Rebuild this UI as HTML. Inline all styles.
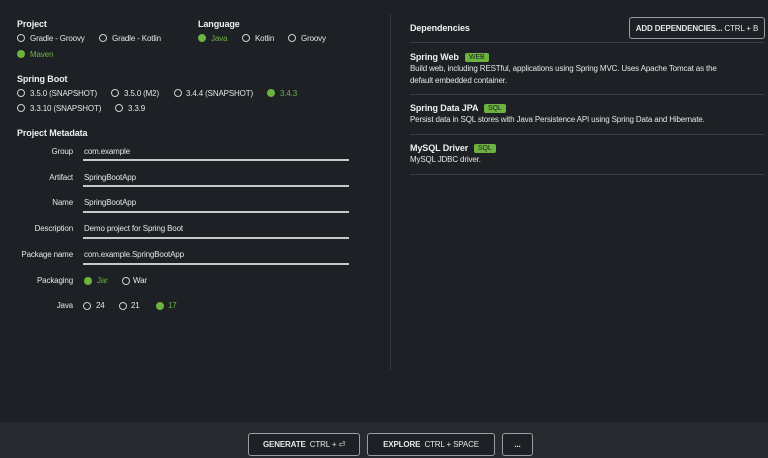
<!DOCTYPE html>
<html><head><meta charset="utf-8"><style>
*{margin:0;padding:0;box-sizing:border-box}
body{width:768px;height:458px;background:#1d2024;font-family:"Liberation Sans",sans-serif;color:#e6e6e6;position:relative;overflow:hidden;font-size:8px;letter-spacing:-0.15px}
.a{position:absolute;white-space:nowrap;line-height:10px}
.h{font-weight:bold;font-size:9px;color:#f0f0f0;letter-spacing:-0.1px}
.r{position:absolute;width:8px;height:8px;border:1px solid #cfcfcf;border-radius:50%}
.r.on{background:#6db33f;border-color:#6db33f}
.g{color:#6db33f}
.lbl{position:absolute;right:695px;white-space:nowrap;line-height:10px;text-align:right}
.ul{position:absolute;left:83px;width:266px;height:2px;background:#c8c8c8}
.hr{position:absolute;left:410px;width:354px;height:1px;background:#3a3e43}
.badge{position:absolute;background:#6db33f;color:#1d2024;font-size:7px;line-height:9px;padding:0 4px;border-radius:2px}
.btn{position:absolute;border:1px solid #9a9ea3;border-radius:3px;background:#1d2024;color:#e6e6e6;font-weight:bold;font-size:8px;display:flex;align-items:center;justify-content:center;white-space:nowrap}
</style></head><body>
<div class="a h" style="left:17px;top:19px">Project</div>
<div class="r" style="left:17px;top:34px"></div><div class="a" style="left:30px;top:34px">Gradle - Groovy</div>
<div class="r" style="left:99px;top:34px"></div><div class="a" style="left:112px;top:34px">Gradle - Kotlin</div>
<div class="r on" style="left:17px;top:50px"></div><div class="a g" style="left:30px;top:50px">Maven</div>
<div class="a h" style="left:198px;top:19px">Language</div>
<div class="r on" style="left:198px;top:34px"></div><div class="a g" style="left:211px;top:34px">Java</div>
<div class="r" style="left:242px;top:34px"></div><div class="a" style="left:255px;top:34px">Kotlin</div>
<div class="r" style="left:288px;top:34px"></div><div class="a" style="left:301px;top:34px">Groovy</div>

<div class="a h" style="left:17px;top:74px">Spring Boot</div>
<div class="r" style="left:17px;top:89px"></div><div class="a" style="left:30px;top:89px">3.5.0 (SNAPSHOT)</div>
<div class="r" style="left:111px;top:89px"></div><div class="a" style="left:124px;top:89px">3.5.0 (M2)</div>
<div class="r" style="left:174px;top:89px"></div><div class="a" style="left:186px;top:89px">3.4.4 (SNAPSHOT)</div>
<div class="r on" style="left:267px;top:89px"></div><div class="a g" style="left:280px;top:89px">3.4.3</div>
<div class="r" style="left:17px;top:104px"></div><div class="a" style="left:30px;top:104px">3.3.10 (SNAPSHOT)</div>
<div class="r" style="left:115px;top:104px"></div><div class="a" style="left:128px;top:104px">3.3.9</div>

<div class="a h" style="left:17px;top:128px">Project Metadata</div>
<div class="lbl" style="top:147px">Group</div><div class="a" style="left:84px;top:147px">com.example</div><div class="ul" style="top:159px"></div>
<div class="lbl" style="top:173px">Artifact</div><div class="a" style="left:84px;top:173px">SpringBootApp</div><div class="ul" style="top:185px"></div>
<div class="lbl" style="top:198px">Name</div><div class="a" style="left:84px;top:198px">SpringBootApp</div><div class="ul" style="top:211px"></div>
<div class="lbl" style="top:224px">Description</div><div class="a" style="left:84px;top:224px">Demo project for Spring Boot</div><div class="ul" style="top:237px"></div>
<div class="lbl" style="top:250px">Package name</div><div class="a" style="left:84px;top:250px">com.example.SpringBootApp</div><div class="ul" style="top:263px"></div>
<div class="lbl" style="top:276px">Packaging</div>
<div class="r on" style="left:84px;top:277px"></div><div class="a g" style="left:97px;top:276px">Jar</div>
<div class="r" style="left:122px;top:277px"></div><div class="a" style="left:133px;top:276px">War</div>
<div class="lbl" style="top:301px">Java</div>
<div class="r" style="left:83px;top:302px"></div><div class="a" style="left:96px;top:301px">24</div>
<div class="r" style="left:119px;top:302px"></div><div class="a" style="left:131px;top:301px">21</div>
<div class="r on" style="left:156px;top:302px"></div><div class="a g" style="left:168px;top:301px">17</div>

<div style="position:absolute;left:390px;top:14px;width:1px;height:356px;background:#34383d"></div>

<div class="a h" style="left:410px;top:23px">Dependencies</div>
<div class="btn" style="left:629px;top:17px;width:136px;height:22px">ADD DEPENDENCIES...&nbsp; <span style="font-weight:normal">CTRL + B</span></div>
<div class="hr" style="top:42px"></div>
<div class="a h" style="left:410px;top:52px">Spring Web</div><div class="badge" style="left:465px;top:53px">WEB</div>
<div class="a" style="left:410px;top:64px">Build web, including RESTful, applications using Spring MVC. Uses Apache Tomcat as the</div>
<div class="a" style="left:410px;top:76px">default embedded container.</div>
<div class="hr" style="top:94px"></div>
<div class="a h" style="left:410px;top:103px">Spring Data JPA</div><div class="badge" style="left:484px;top:104px">SQL</div>
<div class="a" style="left:410px;top:115px">Persist data in SQL stores with Java Persistence API using Spring Data and Hibernate.</div>
<div class="hr" style="top:134px"></div>
<div class="a h" style="left:410px;top:143px">MySQL Driver</div><div class="badge" style="left:474px;top:144px">SQL</div>
<div class="a" style="left:410px;top:155px">MySQL JDBC driver.</div>
<div class="hr" style="top:174px"></div>

<div style="position:absolute;left:0;top:422px;width:768px;height:36px;background:#272a2e"></div>
<div class="btn" style="left:248px;top:433px;width:112px;height:23px">GENERATE&nbsp;&nbsp; <span style="font-weight:normal">CTRL + ⏎</span></div>
<div class="btn" style="left:367px;top:433px;width:128px;height:23px">EXPLORE&nbsp;&nbsp; <span style="font-weight:normal">CTRL + SPACE</span></div>
<div class="btn" style="left:502px;top:433px;width:31px;height:23px">...</div>
</body></html>
